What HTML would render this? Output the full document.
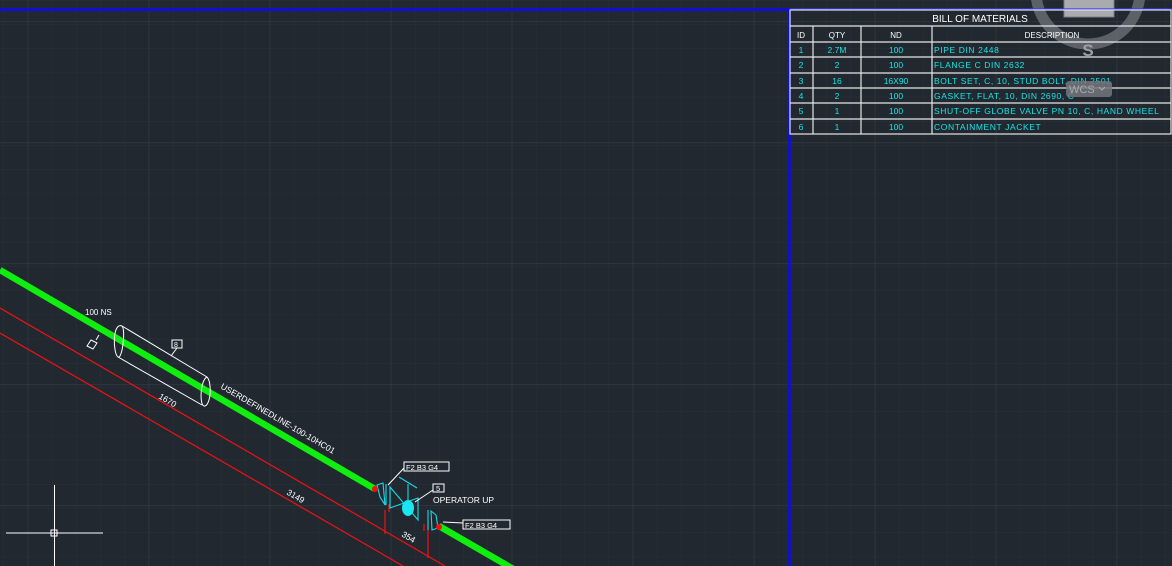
<!DOCTYPE html>
<html><head><meta charset="utf-8"><style>
html,body{margin:0;padding:0;background:#212830;width:1172px;height:566px;overflow:hidden}
svg{display:block}
text{font-family:"Liberation Sans",sans-serif}
</style></head><body>
<svg width="1172" height="566" viewBox="0 0 1172 566" xmlns="http://www.w3.org/2000/svg">
<defs>
<pattern id="minor" x="3.5" y="0" width="24.2" height="24.2" patternUnits="userSpaceOnUse">
<path d="M0 0V24.2M0 0H24.2" stroke="#29303a" stroke-width="1" fill="none"/>
</pattern>
<pattern id="major" x="27.7" y="21.3" width="121" height="121" patternUnits="userSpaceOnUse">
<path d="M0 0V121M0 0H121" stroke="#343b48" stroke-width="1.2" fill="none"/>
</pattern>
</defs>
<rect width="1172" height="566" fill="#212830"/>
<rect width="1172" height="566" fill="url(#minor)"/>
<rect width="1172" height="566" fill="url(#major)"/>

<circle cx="1088" cy="-8" r="52" fill="none" stroke="#6b6f77" stroke-width="11" opacity="0.8"/>
<rect x="1064" y="-2" width="50" height="19" fill="#a9abae" stroke="#7a7d82"/>
<text x="1088" y="56" font-size="17" font-weight="bold" fill="#9da0a5" text-anchor="middle">S</text>

<line x1="0" y1="9.5" x2="790" y2="9.5" stroke="#0a0af5" stroke-width="2.5"/>
<line x1="790" y1="9" x2="1172" y2="9" stroke="#3b3bff" stroke-width="1.2"/>
<line x1="789.5" y1="9" x2="789.5" y2="566" stroke="#0a0af5" stroke-width="2.5"/>

<g stroke="#e6e6e6" stroke-width="1.2" fill="none">
<rect x="790" y="10" width="381" height="124"/>
<line x1="790" y1="26" x2="1171" y2="26"/>
<line x1="790" y1="42" x2="1171" y2="42"/>
<line x1="790" y1="57" x2="1171" y2="57"/>
<line x1="790" y1="73" x2="1171" y2="73"/>
<line x1="790" y1="88" x2="1171" y2="88"/>
<line x1="790" y1="103" x2="1171" y2="103"/>
<line x1="790" y1="119" x2="1171" y2="119"/>
<line x1="813" y1="26" x2="813" y2="134"/>
<line x1="861" y1="26" x2="861" y2="134"/>
<line x1="932" y1="26" x2="932" y2="134"/>
</g>
<g font-size="9" fill="#ffffff" text-anchor="middle">
<text x="980" y="22" font-size="10">BILL OF MATERIALS</text>
<text x="801" y="38" font-size="8">ID</text>
<text x="837" y="38" font-size="8">QTY</text>
<text x="896" y="38" font-size="8">ND</text>
<text x="1052" y="38" font-size="8">DESCRIPTION</text>
</g>
<g font-size="8.5" fill="#19e6e6">
<g text-anchor="middle">
<text x="801" y="53">1</text><text x="837" y="53">2.7M</text><text x="896" y="53">100</text>
<text x="801" y="68">2</text><text x="837" y="68">2</text><text x="896" y="68">100</text>
<text x="801" y="84">3</text><text x="837" y="84">16</text><text x="896" y="84">16X90</text>
<text x="801" y="99">4</text><text x="837" y="99">2</text><text x="896" y="99">100</text>
<text x="801" y="114">5</text><text x="837" y="114">1</text><text x="896" y="114">100</text>
<text x="801" y="130">6</text><text x="837" y="130">1</text><text x="896" y="130">100</text>
</g>
<text x="934" y="53" letter-spacing="0.6">PIPE DIN 2448</text>
<text x="934" y="68" letter-spacing="0.6">FLANGE C DIN 2632</text>
<text x="934" y="84" letter-spacing="0.6">BOLT SET, C, 10, STUD BOLT, DIN 2501</text>
<text x="934" y="99" letter-spacing="0.6">GASKET, FLAT, 10, DIN 2690, C</text>
<text x="934" y="114" letter-spacing="0.6">SHUT-OFF GLOBE VALVE PN 10, C, HAND WHEEL</text>
<text x="934" y="130" letter-spacing="0.6">CONTAINMENT JACKET</text>
</g>
<rect x="1066" y="81" width="46" height="16" rx="3" fill="#73767c" opacity="0.85"/>
<text x="1069" y="93" font-size="11" fill="#a8abb0">WCS</text>
<path d="M1099 87l3 3 3-3" stroke="#a8abb0" fill="none"/>

<g stroke="#f01212" stroke-width="1.2" fill="none">
<line x1="0" y1="308" x2="445" y2="566"/>
<line x1="0" y1="333" x2="403" y2="566"/>
<line x1="385" y1="510" x2="385" y2="534"/>
<line x1="428" y1="530" x2="428" y2="558"/>
<line x1="389" y1="504" x2="389" y2="512"/>
<line x1="424" y1="524" x2="424" y2="531"/>
</g>
<g stroke="#10ee10" stroke-width="6.5" stroke-linecap="butt">
<line x1="0" y1="270" x2="375" y2="489"/>
<line x1="439" y1="526" x2="515" y2="570"/>
</g>
<g stroke="#ffffff" stroke-width="1" fill="none">
<line x1="122" y1="326" x2="207" y2="377"/>
<line x1="118" y1="357" x2="202" y2="405"/>
<path d="M122 326 C112 322 113 354 118 357 C122 360 126 330 122 326"/>
<path d="M207 377 C212 382 211 404 205 406 C199 408 200 380 207 377"/>
<rect x="172" y="340" width="10" height="8"/>
<line x1="177" y1="348" x2="171" y2="356"/>
<path d="M91 340l6 3-4 6-6-3z"/>
<line x1="96" y1="340" x2="99" y2="335"/>
</g>
<text x="174" y="347" font-size="7" fill="#fff">8</text>
<text x="85" y="315" font-size="8" fill="#fff">100 NS</text>
<text font-size="8.5" fill="#fff" transform="translate(220,388) rotate(30.3)">USERDEFINEDLINE-100-10HC01</text>
<text font-size="8.5" fill="#fff" transform="translate(158,398) rotate(30.3)">1670</text>
<text font-size="8.5" fill="#fff" transform="translate(286,494) rotate(30.3)">3149</text>
<text font-size="8.5" fill="#fff" transform="translate(401,536) rotate(30.3)">354</text>

<g stroke="#19d9e6" stroke-width="1.1" fill="none">
<path d="M377 485 L383 483 L385 505 L380 497 Z"/>
<line x1="386" y1="484" x2="386" y2="505"/>
<path d="M390 487 L418 520 L418 498 L390 508 Z"/>
<line x1="408" y1="500" x2="408" y2="484"/>
<line x1="399" y1="477" x2="417" y2="488"/>
<line x1="428" y1="510" x2="428" y2="530"/>
<path d="M431 511 L436 515 L438 528 L432 530 Z"/>
</g>
<ellipse cx="408" cy="508" rx="6" ry="8" fill="#19e6f0"/>
<circle cx="375" cy="489" r="3" fill="#f01010"/>
<circle cx="439" cy="527" r="3" fill="#f01010"/>
<g stroke="#ffffff" stroke-width="1" fill="none">
<rect x="404" y="462" width="45" height="9"/>
<line x1="404" y1="468" x2="388" y2="485"/>
<rect x="433" y="484" width="11" height="8"/>
<line x1="433" y1="490" x2="415" y2="502"/>
<rect x="463" y="520" width="47" height="9"/>
<line x1="463" y1="523" x2="443" y2="522"/>
</g>
<g font-size="7.5" fill="#fff">
<text x="406" y="470">F2 B3 G4</text>
<text x="436" y="491">5</text>
<text x="433" y="503" font-size="8.5">OPERATOR UP</text>
<text x="465" y="528">F2 B3 G4</text>
</g>

<g stroke="#ffffff" stroke-width="1">
<line x1="6" y1="533" x2="103" y2="533"/>
<line x1="54.5" y1="485" x2="54.5" y2="566"/>
<rect x="51" y="530" width="6" height="6" fill="none"/>
</g>
</svg>
</body></html>
